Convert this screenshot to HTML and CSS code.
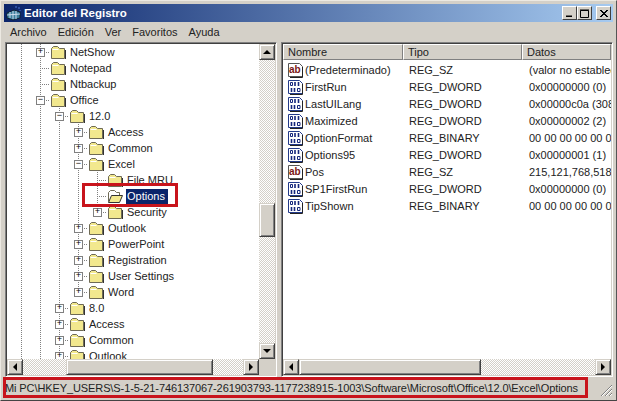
FILE: index.html
```html
<!DOCTYPE html>
<html lang="es">
<head>
<meta charset="utf-8">
<title>Editor del Registro</title>
<link rel="stylesheet" href="styles.css">
</head>
<body>
<svg class="defs" width="0" height="0" aria-hidden="true">
  <symbol id="folder" viewBox="0 0 16 14">
    <path d="M1.5 13.5V3.5L3.5 1.5H7.5L9.5 3.5H14.5V13.5Z" fill="#f2e88e" stroke="#6e6a55"/>
    <path d="M2.5 4.5H8.5" stroke="#fff" fill="none"/>
    <path d="M15.5 5V14.5H3" stroke="#333" fill="none"/>
  </symbol>
  <symbol id="folder-open" viewBox="0 0 16 14">
    <path d="M1.5 12.5V3.5L3.5 1.5H7.5L9.5 3.5H12.5V6" fill="#fff" stroke="#6e6a55"/>
    <path d="M1.5 13.5L4.5 6.5H15.5L12.5 13.5Z" fill="#f2e88e" stroke="#333"/>
  </symbol>
  <symbol id="ic-str" viewBox="0 0 17 16">
    <path d="M1.5 1.5H12.5L15.5 4.5V14.5H1.5Z" fill="#fff" stroke="#555"/>
    <path d="M15.5 5V15.5H3" stroke="#222" fill="none"/>
    <text x="2" y="10.5" class="ic-ab">ab</text>
  </symbol>
  <symbol id="ic-bin" viewBox="0 0 17 16">
    <path d="M1.5 1.5H12.5L15.5 4.5V14.5H1.5Z" fill="#fff" stroke="#223a8a"/>
    <path d="M15.5 5V15.5H3" stroke="#222" fill="none"/>
    <path d="M3.5 3.5h2v3h-2zM10.5 9.5h2.5v3h-2.5z" fill="none" stroke="#14267c"/>
    <path d="M8 3v4M11.5 3v4M4.5 9v4M7.5 9v4" fill="none" stroke="#14267c" stroke-width="1.6"/>
  </symbol>
</svg>
<div class="window">
  <header class="titlebar">
    <svg class="appicon" width="16" height="16" viewBox="0 0 16 16"><path d="M1 8l7-3 6 2v6l-7 2-6-2z" fill="#3a7f9c" stroke="#123"/><path d="M4 7v6M7 6v8M10 6v8M1 10l13-1" stroke="#cde" fill="none"/><path d="M9 1h2v2H9zM12 2h2v2h-2zM13 5h2v1h-2z" fill="#2b4ea0"/></svg>
    <span class="title-text">Editor del Registro</span>
    <div class="caption-btns">
      <button class="cap"><svg width="8" height="8" viewBox="0 0 8 8"><path d="M0 6.5h6v1.5H0z" fill="#000"/></svg></button>
      <button class="cap cap-mr"><svg width="9" height="9" viewBox="0 0 9 9"><path d="M.5 1.5h8v7h-8z" fill="none" stroke="#000"/><path d="M0 1h9" stroke="#000"/></svg></button>
      <button class="cap"><svg width="8" height="7" viewBox="0 0 8 7"><path d="M0 0l7 7M1 0l7 7M7 0L0 7M8 0L1 7" stroke="#000" fill="none"/></svg></button>
    </div>
  </header>
  <nav class="menubar"><span>Archivo</span><span>Edición</span><span>Ver</span><span>Favoritos</span><span>Ayuda</span></nav>
  <main class="panes">
    <section class="pane pane-tree">
      <div class="tree-area">
        <ul class="tree">
          <li class="row"><i class="c v"></i><i class="c v t"><b class="box">+</b></i><svg class="fld"><use href="#folder"/></svg><span class="lbl">NetShow</span></li>
          <li class="row"><i class="c v"></i><i class="c v t"></i><svg class="fld"><use href="#folder"/></svg><span class="lbl">Notepad</span></li>
          <li class="row"><i class="c v"></i><i class="c v t"></i><svg class="fld"><use href="#folder"/></svg><span class="lbl">Ntbackup</span></li>
          <li class="row"><i class="c v"></i><i class="c v t"><b class="box">−</b></i><svg class="fld"><use href="#folder"/></svg><span class="lbl">Office</span></li>
          <li class="row"><i class="c v"></i><i class="c v"></i><i class="c v t"><b class="box">−</b></i><svg class="fld"><use href="#folder"/></svg><span class="lbl">12.0</span></li>
          <li class="row"><i class="c v"></i><i class="c v"></i><i class="c v"></i><i class="c v t"><b class="box">+</b></i><svg class="fld"><use href="#folder"/></svg><span class="lbl">Access</span></li>
          <li class="row"><i class="c v"></i><i class="c v"></i><i class="c v"></i><i class="c v t"><b class="box">+</b></i><svg class="fld"><use href="#folder"/></svg><span class="lbl">Common</span></li>
          <li class="row"><i class="c v"></i><i class="c v"></i><i class="c v"></i><i class="c v t"><b class="box">−</b></i><svg class="fld"><use href="#folder"/></svg><span class="lbl">Excel</span></li>
          <li class="row"><i class="c v"></i><i class="c v"></i><i class="c v"></i><i class="c v"></i><i class="c v t"></i><svg class="fld"><use href="#folder"/></svg><span class="lbl">File MRU</span></li>
          <li class="row"><i class="c v"></i><i class="c v"></i><i class="c v"></i><i class="c v"></i><i class="c v t"></i><svg class="fld"><use href="#folder-open"/></svg><span class="lbl sel">Options</span></li>
          <li class="row"><i class="c v"></i><i class="c v"></i><i class="c v"></i><i class="c v"></i><i class="c u t"><b class="box">+</b></i><svg class="fld"><use href="#folder"/></svg><span class="lbl">Security</span></li>
          <li class="row"><i class="c v"></i><i class="c v"></i><i class="c v"></i><i class="c v t"><b class="box">+</b></i><svg class="fld"><use href="#folder"/></svg><span class="lbl">Outlook</span></li>
          <li class="row"><i class="c v"></i><i class="c v"></i><i class="c v"></i><i class="c v t"><b class="box">+</b></i><svg class="fld"><use href="#folder"/></svg><span class="lbl">PowerPoint</span></li>
          <li class="row"><i class="c v"></i><i class="c v"></i><i class="c v"></i><i class="c v t"><b class="box">+</b></i><svg class="fld"><use href="#folder"/></svg><span class="lbl">Registration</span></li>
          <li class="row"><i class="c v"></i><i class="c v"></i><i class="c v"></i><i class="c v t"><b class="box">+</b></i><svg class="fld"><use href="#folder"/></svg><span class="lbl">User Settings</span></li>
          <li class="row"><i class="c v"></i><i class="c v"></i><i class="c v"></i><i class="c u t"><b class="box">+</b></i><svg class="fld"><use href="#folder"/></svg><span class="lbl">Word</span></li>
          <li class="row"><i class="c v"></i><i class="c v"></i><i class="c v t"><b class="box">+</b></i><svg class="fld"><use href="#folder"/></svg><span class="lbl">8.0</span></li>
          <li class="row"><i class="c v"></i><i class="c v"></i><i class="c v t"><b class="box">+</b></i><svg class="fld"><use href="#folder"/></svg><span class="lbl">Access</span></li>
          <li class="row"><i class="c v"></i><i class="c v"></i><i class="c v t"><b class="box">+</b></i><svg class="fld"><use href="#folder"/></svg><span class="lbl">Common</span></li>
          <li class="row"><i class="c v"></i><i class="c v"></i><i class="c v t"><b class="box">+</b></i><svg class="fld"><use href="#folder"/></svg><span class="lbl">Outlook</span></li>
        </ul>
        <div class="vscroll">
          <button class="sbtn"><span class="arr up"></span></button>
          <div class="track track-a"></div>
          <div class="thumb thumb-v"></div>
          <div class="track"></div>
          <button class="sbtn"><span class="arr down"></span></button>
        </div>
      </div>
      <div class="hscroll">
        <button class="sbtn"><span class="arr left"></span></button>
        <div class="track track-la"></div>
        <div class="thumb thumb-lh"></div>
        <div class="track"></div>
        <button class="sbtn"><span class="arr right"></span></button>
        <div class="corner"></div>
      </div>
    </section>
    <div class="red-box red-opt"></div>
    <section class="pane pane-list">
      <div class="list-head">
        <div class="col col-n">Nombre</div>
        <div class="col col-t">Tipo</div>
        <div class="col col-d">Datos</div>
      </div>
      <div class="list">
        <div class="lrow"><svg class="ic"><use href="#ic-str"/></svg><span class="ln">(Predeterminado)</span><span class="lt">REG_SZ</span><span class="ld">(valor no establecido)</span></div>
        <div class="lrow"><svg class="ic"><use href="#ic-bin"/></svg><span class="ln">FirstRun</span><span class="lt">REG_DWORD</span><span class="ld">0x00000000 (0)</span></div>
        <div class="lrow"><svg class="ic"><use href="#ic-bin"/></svg><span class="ln">LastUILang</span><span class="lt">REG_DWORD</span><span class="ld">0x00000c0a (3082)</span></div>
        <div class="lrow"><svg class="ic"><use href="#ic-bin"/></svg><span class="ln">Maximized</span><span class="lt">REG_DWORD</span><span class="ld">0x00000002 (2)</span></div>
        <div class="lrow"><svg class="ic"><use href="#ic-bin"/></svg><span class="ln">OptionFormat</span><span class="lt">REG_BINARY</span><span class="ld">00 00 00 00 00 00 00 00</span></div>
        <div class="lrow"><svg class="ic"><use href="#ic-bin"/></svg><span class="ln">Options95</span><span class="lt">REG_DWORD</span><span class="ld">0x00000001 (1)</span></div>
        <div class="lrow"><svg class="ic"><use href="#ic-str"/></svg><span class="ln">Pos</span><span class="lt">REG_SZ</span><span class="ld">215,121,768,518,0</span></div>
        <div class="lrow"><svg class="ic"><use href="#ic-bin"/></svg><span class="ln">SP1FirstRun</span><span class="lt">REG_DWORD</span><span class="ld">0x00000000 (0)</span></div>
        <div class="lrow"><svg class="ic"><use href="#ic-bin"/></svg><span class="ln">TipShown</span><span class="lt">REG_BINARY</span><span class="ld">00 00 00 00 00 00 00 00</span></div>
      </div>
      <div class="hscroll">
        <button class="sbtn"><span class="arr left"></span></button>
        <div class="thumb thumb-rh"></div>
        <div class="track"></div>
        <button class="sbtn"><span class="arr right"></span></button>
      </div>
    </section>
  </main>
  <footer class="status">
    <span class="status-text">Mi PC\HKEY_USERS\S-1-5-21-746137067-261903793-1177238915-1003\Software\Microsoft\Office\12.0\Excel\Options</span>
    <svg class="grip" width="13" height="13" viewBox="0 0 13 13"><path d="M12 1L1 12M12 5L5 12M12 9L9 12" stroke="#808080" fill="none"/><path d="M12 2L2 12M12 6L6 12M12 10L10 12" stroke="#fff" fill="none"/></svg>
    <div class="red-box red-status"></div>
  </footer>
</div>
</body>
</html>
```
FILE: styles.css
```css
* { box-sizing: border-box; }
html, body { margin: 0; padding: 0; }
body { width: 617px; height: 401px; overflow: hidden; background: #d4d0c8; font-family: "Liberation Sans", "Noto Sans", sans-serif; font-size: 11px; color: #111; }
.defs { display: block; height: 0; }
.ic-ab { font: bold 10px "Liberation Sans", sans-serif; fill: #7a1414; }
.window { position: relative; width: 617px; height: 401px; padding: 3px 3px 2px 3px; background: #d4d0c8; display: flex; flex-direction: column; border-top: 1px solid #ece9e2; border-left: 1px solid #ece9e2; border-right: 1px solid #555; border-bottom: 1px solid #444; }
.titlebar { height: 18px; flex: none; display: flex; align-items: center; padding-left: 2px; background: linear-gradient(90deg, #0a246a, #a6caf0); color: #fff; }
.appicon { flex: none; }
.title-text { margin-left: 2px; font: bold 11.5px "Liberation Sans", sans-serif; }
.caption-btns { margin-left: auto; display: flex; padding-right: 2px; }
.cap { width: 15px; height: 14px; padding: 0; display: flex; align-items: center; justify-content: center; background: #d4d0c8; border: 1px solid; border-color: #fff #404040 #404040 #fff; }
.cap-mr { margin-right: 4px; }
.menubar { height: 20px; flex: none; display: flex; align-items: center; color: #222; padding-left: 1px; }
.menubar span { padding: 0 5px; margin-right: 1px; }
.panes { position: relative; flex: 1; min-height: 0; display: flex; gap: 4px; margin-left: 1px; }
.pane { display: flex; flex-direction: column; background: #fff; border: 1px solid; border-color: #808080 #fff #fff #808080; box-shadow: inset 1px 1px 0 #404040, inset -1px -1px 0 #d4d0c8; padding: 1px; overflow: hidden; }
.pane-tree { width: 272px; }
.pane-list { flex: 1; min-width: 0; }
.tree-area { flex: 1; min-height: 0; display: flex; }
.tree { flex: 1; min-width: 0; list-style: none; margin: 0; padding: 0 0 0 5px; overflow: hidden; }
.row { height: 16px; display: flex; align-items: center; white-space: nowrap; }
.c { flex: none; width: 19px; height: 16px; display: flex; align-items: center; justify-content: center; background-repeat: no-repeat; }
.v { background-image: repeating-linear-gradient(#808080 0 1px, transparent 1px 2px); background-size: 1px 100%; background-position: 9px 0; }
.u { background-image: repeating-linear-gradient(#808080 0 1px, transparent 1px 2px); background-size: 1px 8px; background-position: 9px 0; }
.t { position: relative; }
.t::after { content: ""; position: absolute; left: 9px; right: 0; top: 8px; height: 1px; background: repeating-linear-gradient(90deg, #808080 0 1px, transparent 1px 2px); }
.box { position: relative; z-index: 1; width: 9px; height: 9px; border: 1px solid #808080; background: #fff; font: 400 9px/7px "Liberation Mono", monospace; color: #000; display: flex; align-items: center; justify-content: center; }
.fld { flex: none; width: 16px; height: 14px; }
.lbl { margin-left: 3px; padding: 0 1px; line-height: 15px; color: #222; }
.sel { background: #0a246a; color: #fff; padding-right: 3px; }
.vscroll { flex: none; width: 16px; display: flex; flex-direction: column; }
.hscroll { flex: none; height: 16px; display: flex; }
.sbtn { flex: none; width: 16px; height: 16px; padding: 0; display: flex; align-items: center; justify-content: center; background: #d4d0c8; border: 1px solid; border-color: #d4d0c8 #404040 #404040 #d4d0c8; box-shadow: inset 1px 1px 0 #fff, inset -1px -1px 0 #808080; }
.track { flex: 1; background-color: #fff; background-image: conic-gradient(#d4d0c8 25%, #fff 0 50%, #d4d0c8 0 75%, #fff 0); background-size: 2px 2px; }
.track-a { flex: none; height: 143px; }
.track-la { flex: none; width: 43px; }
.thumb { flex: none; background: #d4d0c8; border: 1px solid; border-color: #d4d0c8 #404040 #404040 #d4d0c8; box-shadow: inset 1px 1px 0 #fff, inset -1px -1px 0 #808080; }
.thumb-v { height: 34px; }
.thumb-lh { width: 147px; }
.thumb-rh { width: 182px; }
.corner { flex: none; width: 16px; background: #d4d0c8; }
.arr { width: 0; height: 0; border: 4px solid transparent; }
.arr.up { border-top: 0; border-bottom-color: #000; }
.arr.down { border-bottom: 0; border-top-color: #000; }
.arr.left { border-left: 0; border-right-color: #000; }
.arr.right { border-right: 0; border-left-color: #000; }
.list-head { flex: none; height: 16px; display: flex; overflow: hidden; background: #d4d0c8; color: #222; }
.col { flex: none; padding-left: 4px; line-height: 14px; border: 1px solid; border-color: #fff #808080 #808080 #fff; box-shadow: 1px 0 0 #404040; }
.col-n { width: 120px; }
.col-t { width: 119px; }
.col-d { flex: 1; }
.list { flex: 1; min-height: 0; overflow: hidden; padding-top: 1px; }
.lrow { height: 17px; display: flex; align-items: center; white-space: nowrap; color: #222; }
.ic { flex: none; width: 17px; height: 16px; margin-left: 4px; }
.ln { flex: none; width: 105px; padding-left: 1px; }
.lt { flex: none; width: 120px; }
.ld { flex: none; }
.status { position: relative; flex: none; height: 21px; margin-left: 1px; display: flex; align-items: center; }
.status-text { white-space: nowrap; color: #222; letter-spacing: -0.1px; }
.grip { margin-left: auto; align-self: flex-end; margin-bottom: 1px; }
.red-box { position: absolute; border: 3px solid #c8141c; z-index: 2; pointer-events: none; }
.red-opt { left: 77px; top: 141px; width: 96px; height: 24px; }
.red-status { left: -2px; top: 0; width: 585px; height: 21px; }
```
